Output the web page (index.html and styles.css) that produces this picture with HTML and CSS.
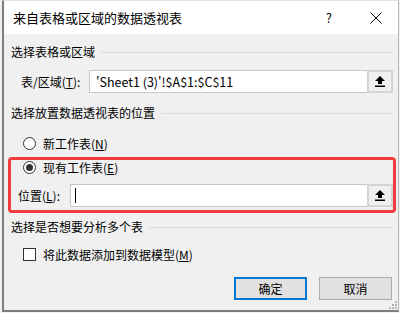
FILE: index.html
```html
<!DOCTYPE html>
<html lang="zh-CN">
<head>
    <meta charset="UTF-8">
    <title>来自表格或区域的数据透视表</title>
    <link rel="stylesheet" href="styles.css">
</head>
<body>
    <div class="window">
        <div class="titlebar">
            <span class="title">来自表格或区域的数据透视表</span>
            <span class="help">?</span>
            <svg class="close" width="12" height="12" viewBox="0 0 12 12">
                <path d="M0.5 0.5 L11.5 11.5 M11.5 0.5 L0.5 11.5" stroke="#000" stroke-width="1"/>
            </svg>
        </div>

        <div class="content">
            <div class="group-title"><span>选择表格或区域</span><i></i></div>
            <div class="field-row first">
                <label>表/区域(<u>T</u>):</label>
                <div class="ref-box wide">
                    <span class="ref-text">'Sheet1 (3)'!$A$1:$C$11</span>
                    <span class="ref-btn">
                        <svg width="10" height="11" viewBox="0 0 10 11">
                            <path d="M5 0 L10 5 L7 5 L7 8 L3 8 L3 5 L0 5 Z" fill="#000"/>
                            <rect x="0" y="9.5" width="10" height="1.5" fill="#000"/>
                        </svg>
                    </span>
                </div>
            </div>

            <div class="group-title second"><span>选择放置数据透视表的位置</span><i></i></div>
            <div class="option first-option">
                <span class="radio"></span>
                <span>新工作表(<u>N</u>)</span>
            </div>

            <div class="highlight">
                <div class="option">
                    <span class="radio checked"></span>
                    <span>现有工作表(<u>E</u>)</span>
                </div>
                <div class="field-row place">
                    <label>位置(<u>L</u>):</label>
                    <div class="ref-box">
                        <span class="ref-text"><span class="caret"></span></span>
                        <span class="ref-btn">
                            <svg width="10" height="11" viewBox="0 0 10 11">
                                <path d="M5 0 L10 5 L7 5 L7 8 L3 8 L3 5 L0 5 Z" fill="#000"/>
                                <rect x="0" y="9.5" width="10" height="1.5" fill="#000"/>
                            </svg>
                        </span>
                    </div>
                </div>
            </div>

            <div class="group-title third"><span>选择是否想要分析多个表</span><i></i></div>
            <div class="option check-option">
                <span class="checkbox"></span>
                <span>将此数据添加到数据模型(<u>M</u>)</span>
            </div>

            <div class="buttons">
                <button class="default">确定</button>
                <button>取消</button>
            </div>
        </div>

        <svg class="grip" width="8" height="8" viewBox="0 0 8 8">
            <rect x="6" y="0" width="2" height="2" fill="#b5b5b5"/>
            <rect x="3" y="3" width="2" height="2" fill="#b5b5b5"/>
            <rect x="6" y="3" width="2" height="2" fill="#b5b5b5"/>
            <rect x="0" y="6" width="2" height="2" fill="#b5b5b5"/>
            <rect x="3" y="6" width="2" height="2" fill="#b5b5b5"/>
            <rect x="6" y="6" width="2" height="2" fill="#b5b5b5"/>
        </svg>
    </div>
</body>
</html>
```

FILE: styles.css
```css
body {
    margin: 0;
    background-color: #f0f0f0;
    font-family: "Noto Sans CJK SC", "Noto Sans", sans-serif;
    font-size: 12px;
    color: #000;
}

.window {
    position: relative;
    box-sizing: border-box;
    width: 397px;
    height: 312px;
    margin-left: 2px;
    background-color: #f0f0f0;
    border-left: 2px solid #7d7d7d;
    border-right: 1px solid #b9b9b9;
    border-bottom: 2px solid #7d7d7d;
    border-top: 1px solid #e3e3e3;
}

.titlebar {
    display: flex;
    align-items: center;
    height: 33px;
    background-color: #fff;
    padding-left: 9px;
}

.title {
    font-size: 13px;
    flex: 1;
}

.help {
    font-size: 13px;
    margin-right: 38px;
}

.close {
    margin-right: 16px;
}

.content {
    padding: 0 5px 0 7px;
}

.group-title {
    display: flex;
    align-items: center;
    height: 16px;
    line-height: 16px;
    margin-top: 10px;
}

.group-title i {
    flex: 1;
    height: 1px;
    background-color: #dcdcdc;
    margin-left: 6px;
}

.group-title.second {
    margin-top: 12px;
}

.group-title.third {
    margin-top: 6px;
}

.field-row {
    display: flex;
    align-items: center;
}

.field-row.first {
    margin-top: 10px;
    padding-left: 10px;
}

.field-row label {
    line-height: 16px;
}

.field-row.first label {
    width: 68px;
}

.place {
    margin-top: 9px;
    padding-left: 7px;
}

.place label {
    width: 52px;
}

.ref-box {
    flex: 1;
    display: flex;
    height: 23px;
    box-sizing: border-box;
    border: 1px solid #c6c6c6;
    background-color: #fff;
}

.ref-text {
    flex: 1;
    display: flex;
    align-items: center;
    padding-left: 6px;
    font-size: 12.5px;
}

.caret {
    width: 1px;
    height: 15px;
    background-color: #000;
    margin-left: -2px;
}

.ref-btn {
    display: flex;
    align-items: center;
    justify-content: center;
    width: 22px;
    background-color: #f0f0f0;
    border: 2px solid #d4d4d4;
    margin: -1px -1px -1px 0;
}

.option {
    display: flex;
    align-items: center;
    height: 16px;
    gap: 7px;
    padding-left: 12px;
}

.first-option {
    margin-top: 14px;
}

.radio {
    box-sizing: border-box;
    width: 13px;
    height: 13px;
    border: 1px solid #333;
    border-radius: 50%;
    background-color: #fff;
    display: flex;
    align-items: center;
    justify-content: center;
}

.radio.checked::after {
    content: "";
    width: 7px;
    height: 7px;
    border-radius: 50%;
    background-color: #333;
}

.checkbox {
    box-sizing: border-box;
    width: 13px;
    height: 13px;
    border: 1px solid #333;
    background-color: #fff;
}

.highlight {
    margin: 6px -3px 0 -3px;
    padding: 0 0 3px 0;
    border: 3px solid #f03c3c;
    border-radius: 4px;
}

.highlight .option {
    margin-top: -1px;
    padding-left: 12px;
}

.check-option {
    margin-top: 11px;
}

.buttons {
    display: flex;
    justify-content: flex-end;
    gap: 12px;
    margin-top: 15px;
    padding-right: 1px;
}

button {
    box-sizing: border-box;
    width: 73px;
    height: 23px;
    background-color: #e1e1e1;
    border: 1px solid #adadad;
    font-family: "Noto Sans CJK SC", "Noto Sans", sans-serif;
    font-size: 12px;
    padding: 0;
}

button.default {
    border: 2px solid #0078d7;
}

.grip {
    position: absolute;
    right: 1px;
    bottom: 1px;
}
```
